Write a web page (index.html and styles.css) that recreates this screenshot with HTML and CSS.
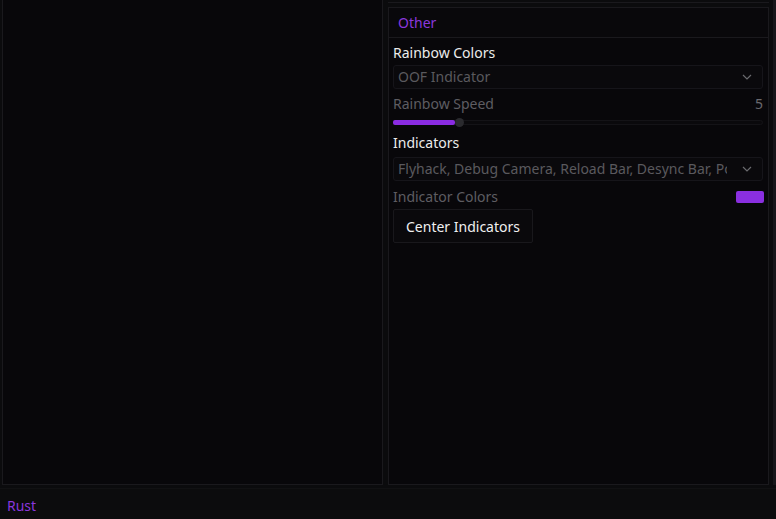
FILE: index.html
```html
<!DOCTYPE html>
<html>
<head>
<meta charset="utf-8">
<link rel="stylesheet" href="styles.css">
</head>
<body>
<div class="app">
  <div class="main">
    <div class="panel left"></div>
    <div class="rightcol">
      <div class="prev"></div>
      <div class="section">
        <div class="sec-head">Other</div>
        <div class="sec-body">
          <div class="label bright l1">Rainbow Colors</div>
          <div class="combo c1"><span class="combo-text">OOF Indicator</span><svg class="chev" width="10" height="6" viewBox="0 0 10 6"><polyline points="1,1 5,5 9,1" fill="none" stroke="#6a6a6e" stroke-width="1.2"/></svg></div>
          <div class="row r-speed"><span class="label dim">Rainbow Speed</span><span class="val">5</span></div>
          <div class="slider"><div class="fill" style="width:62px"></div><div class="thumb"></div></div>
          <div class="label bright l2">Indicators</div>
          <div class="combo c2"><span class="combo-text">Flyhack, Debug Camera, Reload Bar, Desync Bar, Powershot, Hit Marker</span><svg class="chev" width="10" height="6" viewBox="0 0 10 6"><polyline points="1,1 5,5 9,1" fill="none" stroke="#6a6a6e" stroke-width="1.2"/></svg></div>
          <div class="row r-color"><span class="label dim">Indicator Colors</span><span class="swatch"></span></div>
          <button class="btn">Center Indicators</button>
        </div>
      </div>
    </div>
    <div class="edge"></div>
  </div>
  <div class="footer"><span class="brand">Rust</span></div>
</div>
</body>
</html>
```
FILE: styles.css
```css
html, body {
  margin: 0;
  padding: 0;
  background: #0b0b0d;
  font-family: "Noto Sans", "Open Sans", sans-serif;
  font-size: 14px;
}
.app {
  width: 776px;
  height: 519px;
  display: flex;
  flex-direction: column;
  overflow: hidden;
}
.main {
  height: 485px;
  display: flex;
  padding-left: 2px;
  box-sizing: border-box;
}
.panel.left {
  width: 381px;
  background: #08070a;
  border: 1px solid #1a191d;
  border-top: none;
  box-sizing: border-box;
}
.rightcol {
  width: 381px;
  margin-left: 5px;
  display: flex;
  flex-direction: column;
}
.prev {
  height: 3px;
  border-bottom: 1px solid #1a191d;
  box-sizing: border-box;
}
.section {
  margin-top: 4px;
  flex: 1;
  background: #08070a;
  border: 1px solid #1a191d;
  box-sizing: border-box;
  display: flex;
  flex-direction: column;
}
.sec-head {
  height: 30px;
  line-height: 29px;
  box-sizing: border-box;
  border-bottom: 1px solid #1a191d;
  padding-left: 9px;
  color: #8a37dc;
  background: #09080b;
}
.sec-body {
  padding: 5px 5px 0 4px;
  display: flex;
  flex-direction: column;
  align-items: flex-start;
}
.label {
  line-height: 18px;
  white-space: nowrap;
}
.l1 { margin-top: 1px; }
.bright { color: #ececec; }
.dim { color: #5e5d62; }
.combo {
  align-self: stretch;
  height: 24px;
  border: 1px solid #16151a;
  border-radius: 3px;
  background: #0a090c;
  box-sizing: border-box;
  display: flex;
  align-items: center;
  padding: 0 10px 0 4px;
}
.c1 { margin-top: 3px; }
.c2 { margin-top: 5px; }
.combo-text {
  flex: 1;
  color: #5a595e;
  white-space: nowrap;
  overflow: hidden;
  margin-right: 15px;
  line-height: 22px;
}
.chev { flex: none; }
.row {
  align-self: stretch;
  display: flex;
  justify-content: space-between;
  align-items: center;
}
.r-speed { margin-top: 6px; }
.val {
  color: #6a696e;
  line-height: 18px;
}
.slider {
  align-self: stretch;
  position: relative;
  height: 5px;
  margin-top: 7px;
  border: 1px solid #141317;
  border-radius: 3px;
  box-sizing: border-box;
  background: #0a090c;
}
.fill {
  position: absolute;
  left: -1px;
  top: -1px;
  height: 5px;
  background: #8a2be2;
  border-radius: 2px;
}
.thumb {
  position: absolute;
  left: 61px;
  top: -3px;
  width: 9px;
  height: 9px;
  border-radius: 50%;
  background: #2a2a2e;
}
.l2 { margin-top: 9px; }
.r-color { margin-top: 7px; }
.swatch {
  width: 28px;
  height: 12px;
  background: #8a2fe0;
  border-radius: 2px;
  margin-right: -1px;
}
.btn {
  margin-top: 3px;
  height: 34px;
  padding: 0 12px;
  background: #0a090c;
  border: 1px solid #19181c;
  border-radius: 2px;
  color: #f0f0f0;
  font-family: inherit;
  font-size: 14px;
}
.edge {
  margin-left: 4px;
  width: 3px;
  background: #17161a;
}
.footer {
  margin-top: 3px;
  flex: 1;
  background: #0c0c0d;
  border-top: 1px solid #111113;
  display: flex;
  align-items: center;
  padding-left: 7px;
  padding-top: 2px;
}
.brand {
  color: #8a37dc;
}
```
